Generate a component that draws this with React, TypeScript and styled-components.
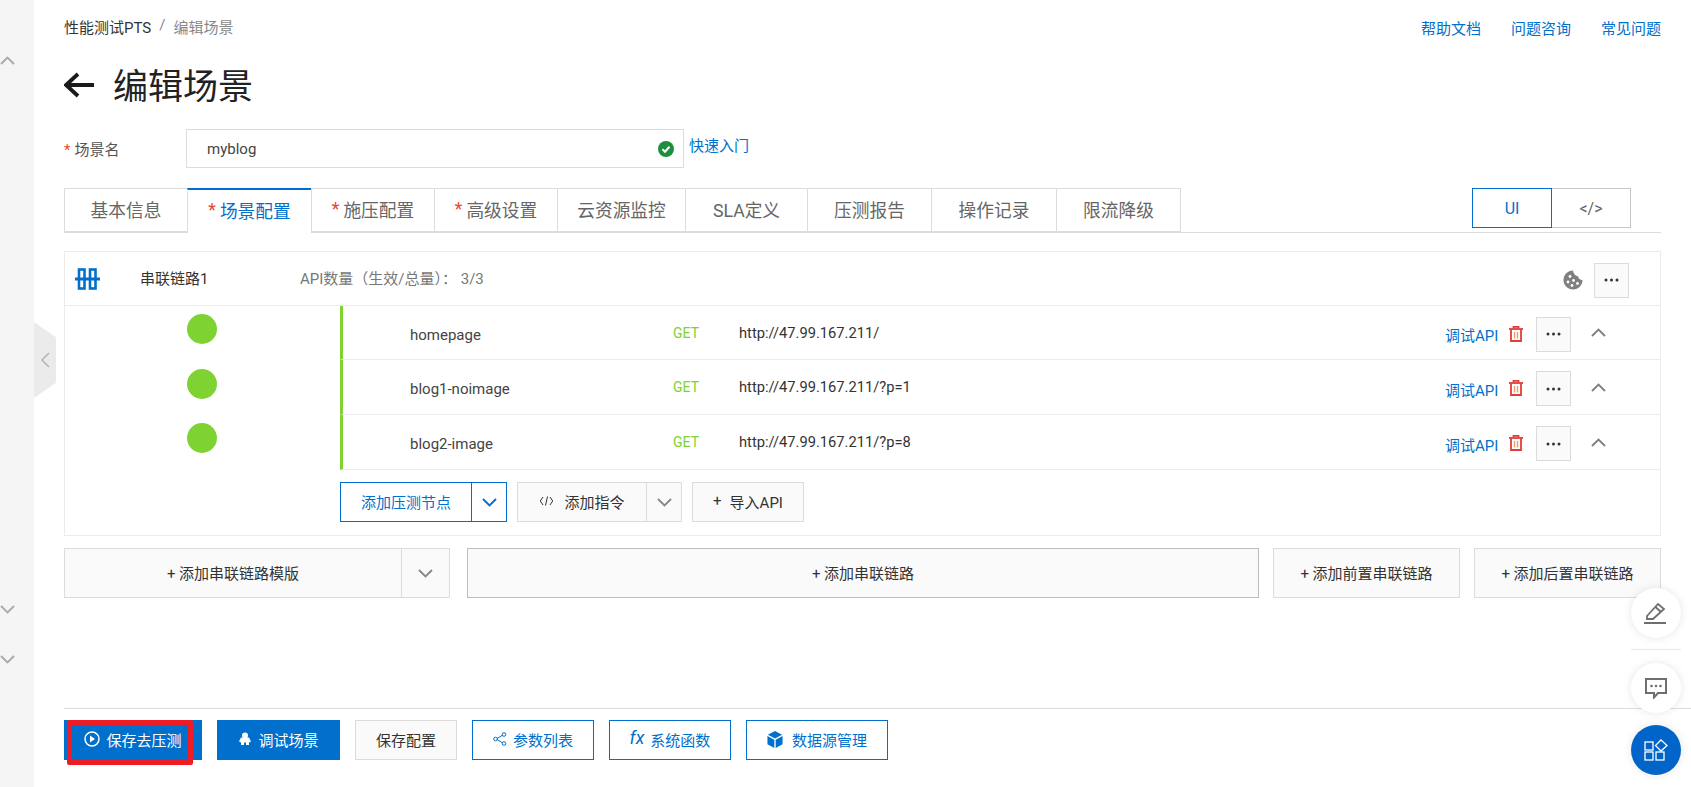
import React from "react";
import styled, { createGlobalStyle } from "styled-components";

const Global = createGlobalStyle`
  html, body { margin: 0; padding: 0; height: 100%; background: #fff; overflow: hidden; }
  body { font-family: Roboto, "Noto Sans CJK SC", sans-serif; color: #333; }
  * { box-sizing: border-box; }
`;

const Page = styled.div`
  position: relative;
  display: flex;
  width: 1691px;
  height: 787px;
  overflow: hidden;
`;
const Gutter = styled.aside`
  position: relative;
  width: 34px;
  flex: none;
  background: #f5f5f5;
  padding-top: 50px;
  display: flex;
  flex-direction: column;
  color: #aaa;
`;
const GutterChevron = styled.span<{ $top: number }>`
  display: block;
  height: 14px;
  margin-top: ${(p) => p.$top}px;
`;
const Tongue = styled.div`
  position: absolute;
  left: 34px;
  top: 322px;
  width: 22px;
  height: 76px;
  background: #ebebeb;
  clip-path: polygon(0 0, 100% 20%, 100% 80%, 0 100%);
  display: flex;
  align-items: center;
  justify-content: center;
  color: #b5b5b5;
`;
const Main = styled.main`
  flex: 1;
  display: flex;
  flex-direction: column;
  padding-left: 30px;
  min-width: 0;
`;
const Inner = styled.div`
  width: 1597px;
`;
const TopBar = styled.div`
  height: 52px;
  display: flex;
  justify-content: space-between;
  align-items: center;
  font-size: 15px;
`;
const Crumbs = styled.div`
  display: flex;
  gap: 8px;
  color: #333;
`;
const CrumbDim = styled.span`
  color: #888;
`;
const Links = styled.div`
  display: flex;
  gap: 30px;
  margin-top: 2px;
  color: #0070cc;
`;
const Title = styled.h1`
  margin: 0;
  height: 62px;
  display: flex;
  align-items: center;
  gap: 19px;
  font-size: 35px;
  font-weight: 400;
  color: #222;
`;
const BackArrow = styled.svg`
  margin-top: 3px;
`;
const FormRow = styled.div`
  margin-top: 15px;
  display: flex;
  align-items: flex-start;
`;
const Label = styled.label`
  width: 122px;
  height: 39px;
  line-height: 42px;
  font-size: 15px;
  color: #555;
`;
const Star = styled.span`
  color: #e84738;
  margin-right: 4px;
`;
const InputBox = styled.div`
  width: 498px;
  height: 39px;
  border: 1px solid #dcdcdc;
  padding: 0 9px 0 20px;
  display: flex;
  align-items: center;
  justify-content: space-between;
  font-size: 15px;
  color: #444;
`;
const QuickLink = styled.a`
  margin-left: 5px;
  margin-top: 6px;
  font-size: 15px;
  line-height: 22px;
  color: #0070cc;
`;
const TabRow = styled.div`
  margin-top: 20px;
  height: 45px;
  display: flex;
  justify-content: space-between;
  border-bottom: 1px solid #dcdcdc;
`;
const Tabs = styled.div`
  display: flex;
`;
const Tab = styled.div<{ $w: number; $active?: boolean }>`
  width: ${(p) => p.$w}px;
  height: ${(p) => (p.$active ? 45 : 44)}px;
  margin-left: -1px;
  padding-bottom: 3px;
  background: #fff;
  border: 1px solid #dcdcdc;
  border-top: ${(p) => (p.$active ? "2px solid #0070cc" : "1px solid #dcdcdc")};
  border-bottom: ${(p) => (p.$active ? "none" : "1px solid #dcdcdc")};
  display: flex;
  align-items: center;
  justify-content: center;
  font-size: 17.7px;
  color: ${(p) => (p.$active ? "#0070cc" : "#666")};
  &:first-child { margin-left: 0; }
`;
const ViewSwitch = styled.div`
  display: flex;
  margin-right: 30px;
  height: 40px;
`;
const ViewBtn = styled.div<{ $on?: boolean }>`
  width: ${(p) => (p.$on ? 80 : 79)}px;
  border: 1px solid ${(p) => (p.$on ? "#0070cc" : "#c4c6cc")};
  border-left-width: ${(p) => (p.$on ? 1 : 0)}px;
  color: ${(p) => (p.$on ? "#0070cc" : "#666")};
  display: flex;
  align-items: center;
  justify-content: center;
  font-size: 16px;
`;
const Card = styled.section`
  margin-top: 18px;
  border: 1px solid #ebebeb;
  height: 285px;
`;
const CardHead = styled.div`
  height: 54px;
  display: flex;
  align-items: center;
  border-bottom: 1px solid #ebebeb;
  padding: 0 31px 0 10px;
  font-size: 15px;
`;
const ChainName = styled.span`
  margin-left: 40px;
  width: 160px;
  color: #333;
  margin-top: -2px;
`;
const ChainCount = styled.span`
  flex: 1;
  color: #777;
  margin-top: -2px;
`;
const MoreBtn = styled.button`
  width: 35px;
  height: 35px;
  margin-top: 3px;
  padding: 0;
  border: 1px solid #dcdcdc;
  background: #fafafa;
  display: flex;
  align-items: center;
  justify-content: center;
  color: #333;
`;
const CardBody = styled.div`
  display: flex;
`;
const Dots = styled.div`
  width: 275px;
  flex: none;
  padding: 8px 0 0 122px;
  display: flex;
  flex-direction: column;
  gap: 24.5px;
`;
const Dot = styled.div`
  width: 30px;
  height: 30px;
  border-radius: 50%;
  background: #7ed332;
`;
const Rows = styled.div`
  flex: 1;
  min-width: 0;
`;
const ApiRow = styled.div`
  height: 55px;
  display: flex;
  align-items: center;
  border-left: 3px solid #7ed332;
  border-bottom: 1px solid #ebebeb;
  padding: 0 0 0 67px;
  font-size: 15px;
  &:first-child { height: 54px; }
`;
const ApiName = styled.span`
  width: 263px;
  color: #444;
  margin-top: 4px;
`;
const ApiMethod = styled.span`
  width: 66px;
  font-size: 14px;
  color: #7ed332;
  margin-top: 0;
`;
const ApiUrl = styled.span`
  flex: 1;
  font-size: 14.7px;
  color: #333;
  margin-top: 0;
`;
const DebugLink = styled.a`
  color: #0070cc;
  width: 64px;
  margin-top: 4px;
`;
const TrashIcon = styled.svg`
  margin: 2px 13px 0 0;
`;
const RowChevron = styled.span`
  width: 15px;
  height: 9px;
  display: block;
  margin: 0 54px 0 20px;
  color: #808080;
  line-height: 0;
`;
const RowActions = styled.div`
  display: flex;
  gap: 10px;
  padding: 12px 0 0 0;
`;
const SplitBtn = styled.div<{ $blue?: boolean }>`
  height: 40px;
  display: flex;
  border: 1px solid ${(p) => (p.$blue ? "#0070cc" : "#dcdcdc")};
  background: ${(p) => (p.$blue ? "#fff" : "#fafafa")};
  color: ${(p) => (p.$blue ? "#0070cc" : "#333")};
  font-size: 15px;
`;
const SplitMain = styled.div<{ $w: number }>`
  width: ${(p) => p.$w}px;
  padding-bottom: 2px;
  display: flex;
  align-items: center;
  justify-content: center;
  gap: 10px;
`;
const SplitArrow = styled.div<{ $w: number; $blue?: boolean }>`
  width: ${(p) => p.$w}px;
  display: flex;
  align-items: center;
  justify-content: center;
  border-left: 1px solid ${(p) => (p.$blue ? "#0070cc" : "#dcdcdc")};
  color: ${(p) => (p.$blue ? "#0070cc" : "#888")};
`;
const PlainBtn = styled.div<{ $w: number }>`
  width: ${(p) => p.$w}px;
  height: 40px;
  padding-bottom: 2px;
  border: 1px solid #dcdcdc;
  background: #fafafa;
  display: flex;
  align-items: center;
  justify-content: center;
  gap: 8px;
  font-size: 15px;
  color: #333;
`;
const AddRow = styled.div`
  margin-top: 12px;
  display: flex;
  height: 50px;
  font-size: 15px;
  color: #333;
`;
const AddBox = styled.div<{ $w: number; $gap: number; $dark?: boolean }>`
  width: ${(p) => p.$w}px;
  margin-left: ${(p) => p.$gap}px;
  display: flex;
  border: 1px solid ${(p) => (p.$dark ? "#bdbdbd" : "#dcdcdc")};
  background: #fafafa;
`;
const AddLabel = styled.div`
  flex: 1;
  padding-bottom: 2px;
  display: flex;
  align-items: center;
  justify-content: center;
  white-space: nowrap;
`;
const Footer = styled.footer`
  margin-top: 110px;
  width: 1627px;
  border-top: 1px solid #dcdcdc;
  padding-top: 11px;
  display: flex;
  gap: 15px;
`;
const FootBtn = styled.div<{ $w: number; $kind: "solid" | "plain" | "line" }>`
  position: relative;
  width: ${(p) => p.$w}px;
  height: 40px;
  padding-bottom: 2px;
  display: flex;
  align-items: center;
  justify-content: center;
  gap: 6px;
  font-size: 15px;
  background: ${(p) => (p.$kind === "solid" ? "#0070cc" : p.$kind === "plain" ? "#fafafa" : "#fff")};
  color: ${(p) => (p.$kind === "solid" ? "#fff" : p.$kind === "plain" ? "#333" : "#0070cc")};
  border: 1px solid ${(p) => (p.$kind === "plain" ? "#dcdcdc" : "#0070cc")};
`;
const FxMark = styled.span`
  font-style: italic;
  font-family: Roboto, sans-serif;
  font-size: 18px;
  margin-top: -3px;
`;
const CubeIcon = styled.svg`
  margin-right: 3px;
`;
const RedMark = styled.div`
  position: absolute;
  left: 2px;
  top: -1px;
  width: 126px;
  height: 45px;
  border: 5px solid #ee1c25;
  border-radius: 2px;
  pointer-events: none;
`;
const Fabs = styled.div`
  position: absolute;
  left: 1631px;
  top: 588px;
  width: 50px;
  display: flex;
  flex-direction: column;
  align-items: center;
`;
const Fab = styled.button<{ $blue?: boolean }>`
  width: 50px;
  height: 50px;
  padding: 0;
  border: none;
  border-radius: 50%;
  background: ${(p) => (p.$blue ? "#0064c8" : "#fff")};
  box-shadow: 0 0 10px rgba(0, 0, 0, 0.1);
  display: flex;
  align-items: center;
  justify-content: center;
`;
const FabDivider = styled.div`
  width: 50px;
  height: 1px;
  background: #e8e8e8;
  margin: 11px 0 13px;
`;
const FabGap = styled.div`
  height: 12px;
`;

const Chevron = ({ up, w = 15, h = 9, sw = 1.9 }: { up?: boolean; w?: number; h?: number; sw?: number }) => (
  <svg width={w} height={h} viewBox="0 0 15 9" fill="none" stroke="currentColor" strokeWidth={sw} preserveAspectRatio="none">
    <path d={up ? "M1 8L7.5 1.5L14 8" : "M1 1L7.5 7.5L14 1"} />
  </svg>
);
const Dots3 = () => (
  <svg width="15" height="4" viewBox="0 0 15 4" fill="currentColor">
    <circle cx="2" cy="2" r="1.5" />
    <circle cx="7.5" cy="2" r="1.5" />
    <circle cx="13" cy="2" r="1.5" />
  </svg>
);
const Trash = () => (
  <TrashIcon width="14" height="16" viewBox="0 0 14 16" fill="none" stroke="#e23c39" strokeWidth="1.8">
    <path d="M0 3H14" />
    <path d="M4.5 2.2V.8H9.5V2.2" />
    <path d="M2 3.5V15H12V3.5" />
    <path d="M5.5 6V12.5M8.5 6V12.5" stroke="#e8a06a" strokeWidth="1.4" />
  </TrashIcon>
);
const Cookie = () => (
  <svg width="20" height="20" viewBox="0 0 20 20">
    <path d="M10 .5C4.7.5.5 4.8.5 10s4.2 9.500 9.500 9.500 9.500-4.200 9.500-9.500c-2.400 0-4.200-1.500-4.500-3.800C12.600 6.100 10.400 3.500 10 .5Z" fill="#808080" />
    <circle cx="7" cy="6.5" r="1.4" fill="#fff" />
    <circle cx="5" cy="12" r="1.4" fill="#fff" />
    <circle cx="10.5" cy="10.5" r="1.4" fill="#fff" />
    <circle cx="9" cy="15.5" r="1.4" fill="#fff" />
    <circle cx="14.5" cy="13.5" r="1.4" fill="#fff" />
  </svg>
);
const CookieSlot = styled.span`
  display: flex;
  margin: 3px 11px 0 0;
`;
const ChainIcon = () => (
  <svg width="25" height="22" viewBox="0 0 25 22" fill="none" stroke="#0070cc">
    <path d="M0 11H25" strokeWidth="3" />
    <rect x="4" y="1.500" width="5.500" height="19" strokeWidth="2.600" />
    <rect x="15" y="1.500" width="5.500" height="19" strokeWidth="2.600" />
  </svg>
);

const tabs: [string, number, boolean][] = [
  ["基本信息", 124, false],
  ["场景配置", 125, true],
  ["施压配置", 124, true],
  ["高级设置", 124, true],
  ["云资源监控", 129, false],
  ["SLA定义", 123, false],
  ["压测报告", 125, false],
  ["操作记录", 126, false],
  ["限流降级", 125, false],
];
const apis = [
  ["homepage", "http://47.99.167.211/"],
  ["blog1-noimage", "http://47.99.167.211/?p=1"],
  ["blog2-image", "http://47.99.167.211/?p=8"],
];

export default function App() {
  return (
    <Page>
      <Global />
      <Gutter>
        <GutterChevron $top={0}><Chevron up /></GutterChevron>
        <GutterChevron $top={535}><Chevron /></GutterChevron>
        <GutterChevron $top={36}><Chevron /></GutterChevron>
        <Tongue>
          <svg width="10" height="16" viewBox="0 0 10 16" fill="none" stroke="currentColor" strokeWidth="1.6"><path d="M9 1L2 8L9 15" /></svg>
        </Tongue>
      </Gutter>
      <Main>
        <Inner>
          <TopBar>
            <Crumbs><span>性能测试PTS</span><CrumbDim>/</CrumbDim><CrumbDim>编辑场景</CrumbDim></Crumbs>
            <Links><span>帮助文档</span><span>问题咨询</span><span>常见问题</span></Links>
          </TopBar>
          <Title>
            <BackArrow width="30" height="26" viewBox="0 0 30 26" fill="none" stroke="#1a1a1a" strokeWidth="3.8"><path d="M30 13H3M14 2L2 13L14 24" /></BackArrow>
            编辑场景
          </Title>
          <FormRow>
            <Label><Star>*</Star>场景名</Label>
            <InputBox>
              myblog
              <svg width="16" height="16" viewBox="0 0 16 16"><circle cx="8" cy="8" r="8" fill="#1e8e3e" /><path d="M4.500 8.200L7 10.700L11.500 5.800" fill="none" stroke="#fff" strokeWidth="2" /></svg>
            </InputBox>
            <QuickLink>快速入门</QuickLink>
          </FormRow>
          <TabRow>
            <Tabs>
              {tabs.map(([t, w, req], i) => (
                <Tab key={t} $w={w} $active={i === 1}>
                  {req && <Star>*</Star>}{t}
                </Tab>
              ))}
            </Tabs>
            <ViewSwitch>
              <ViewBtn $on>UI</ViewBtn>
              <ViewBtn>&lt;/&gt;</ViewBtn>
            </ViewSwitch>
          </TabRow>
          <Card>
            <CardHead>
              <ChainIcon />
              <ChainName>串联链路1</ChainName>
              <ChainCount>API数量（生效/总量）： 3/3</ChainCount>
              <CookieSlot><Cookie /></CookieSlot>
              <MoreBtn><Dots3 /></MoreBtn>
            </CardHead>
            <CardBody>
              <Dots>{apis.map((a) => <Dot key={a[0]} />)}</Dots>
              <Rows>
                {apis.map(([n, u]) => (
                  <ApiRow key={n}>
                    <ApiName>{n}</ApiName>
                    <ApiMethod>GET</ApiMethod>
                    <ApiUrl>{u}</ApiUrl>
                    <DebugLink>调试API</DebugLink>
                    <Trash />
                    <MoreBtn><Dots3 /></MoreBtn>
                    <RowChevron><Chevron up /></RowChevron>
                  </ApiRow>
                ))}
                <RowActions>
                  <SplitBtn $blue>
                    <SplitMain $w={130}>添加压测节点</SplitMain>
                    <SplitArrow $w={35} $blue><Chevron /></SplitArrow>
                  </SplitBtn>
                  <SplitBtn>
                    <SplitMain $w={128}>
                      <svg width="15" height="10" viewBox="0 0 14 10" fill="none" stroke="#333" strokeWidth="1"><path d="M3.500 1L.8 5L3.500 9M10.500 1L13.200 5L10.500 9M8 .5L6 9.500" /></svg>
                      添加指令
                    </SplitMain>
                    <SplitArrow $w={35}><Chevron /></SplitArrow>
                  </SplitBtn>
                  <PlainBtn $w={112}>+ <span>导入API</span></PlainBtn>
                </RowActions>
              </Rows>
            </CardBody>
          </Card>
          <AddRow>
            <AddBox $w={386} $gap={0}>
              <AddLabel>+ 添加串联链路模版</AddLabel>
              <SplitArrow $w={48}><Chevron /></SplitArrow>
            </AddBox>
            <AddBox $w={792} $gap={17} $dark><AddLabel>+ 添加串联链路</AddLabel></AddBox>
            <AddBox $w={187} $gap={14}><AddLabel>+ 添加前置串联链路</AddLabel></AddBox>
            <AddBox $w={187} $gap={14}><AddLabel>+ 添加后置串联链路</AddLabel></AddBox>
          </AddRow>
          <Footer>
            <FootBtn $w={138} $kind="solid">
              <svg width="16" height="16" viewBox="0 0 16 16" fill="none" stroke="#fff" strokeWidth="1.500"><circle cx="8" cy="8" r="7" /><path d="M6 4.500L11 8L6 11.500Z" fill="#fff" stroke="none" /></svg>
              保存去压测
              <RedMark />
            </FootBtn>
            <FootBtn $w={123} $kind="solid">
              <svg width="14" height="14" viewBox="0 0 14 14" fill="#fff"><circle cx="7" cy="3.500" r="3" /><path d="M3 5.500H11L13 9.500L11 10.500V13H8V10.500H6V13H3V10.500L1 9.500Z" /></svg>
              调试场景
            </FootBtn>
            <FootBtn $w={102} $kind="plain">保存配置</FootBtn>
            <FootBtn $w={122} $kind="line">
              <svg width="14" height="14" viewBox="0 0 14 14" fill="none" stroke="#0070cc"><circle cx="2.500" cy="7" r="1.800" /><circle cx="11" cy="2.500" r="1.800" /><circle cx="11" cy="11.500" r="1.800" /><path d="M4 6.500L9.500 3.200M4 7.500L9.500 10.800" /></svg>
              参数列表
            </FootBtn>
            <FootBtn $w={122} $kind="line">
              <FxMark>fx</FxMark>
              系统函数
            </FootBtn>
            <FootBtn $w={142} $kind="line">
              <CubeIcon width="16" height="17" viewBox="0 0 16 18" fill="#0070cc"><path d="M8 0L15.500 4L8 8L.5 4Z" /><path d="M0 5.300L7.300 9.300V18L0 14Z" /><path d="M16 5.300L8.700 9.300V18L16 14Z" /></CubeIcon>
              数据源管理
            </FootBtn>
          </Footer>
        </Inner>
      </Main>
      <Fabs>
        <Fab>
          <svg width="24" height="22" viewBox="0 0 24 22" fill="none" stroke="#6e6e6e" strokeWidth="1.800"><path d="M3 14L14 2L20 7L9 17H3Z" /><path d="M0 21H22" strokeWidth="2" /><path d="M11.500 5L17 10" /></svg>
        </Fab>
        <FabDivider />
        <Fab>
          <svg width="22" height="21" viewBox="0 0 22 21" fill="none" stroke="#6e6e6e" strokeWidth="2"><path d="M1 1H21V15H13L9 19.500V15H1Z" /><g fill="#6e6e6e" stroke="none"><circle cx="6.500" cy="8" r="1.300" /><circle cx="11" cy="8" r="1.300" /><circle cx="15.500" cy="8" r="1.300" /></g></svg>
        </Fab>
        <FabGap />
        <Fab $blue>
          <svg width="24" height="22" viewBox="0 0 24 22" fill="none" stroke="#fff" strokeWidth="1.300"><rect x="1" y="3" width="8" height="8" /><rect x="1" y="13" width="8" height="8" /><rect x="12" y="13" width="8" height="8" /><path d="M17 1L23 6.500L17 12L11.500 6.500Z" /></svg>
        </Fab>
      </Fabs>
    </Page>
  );
}
